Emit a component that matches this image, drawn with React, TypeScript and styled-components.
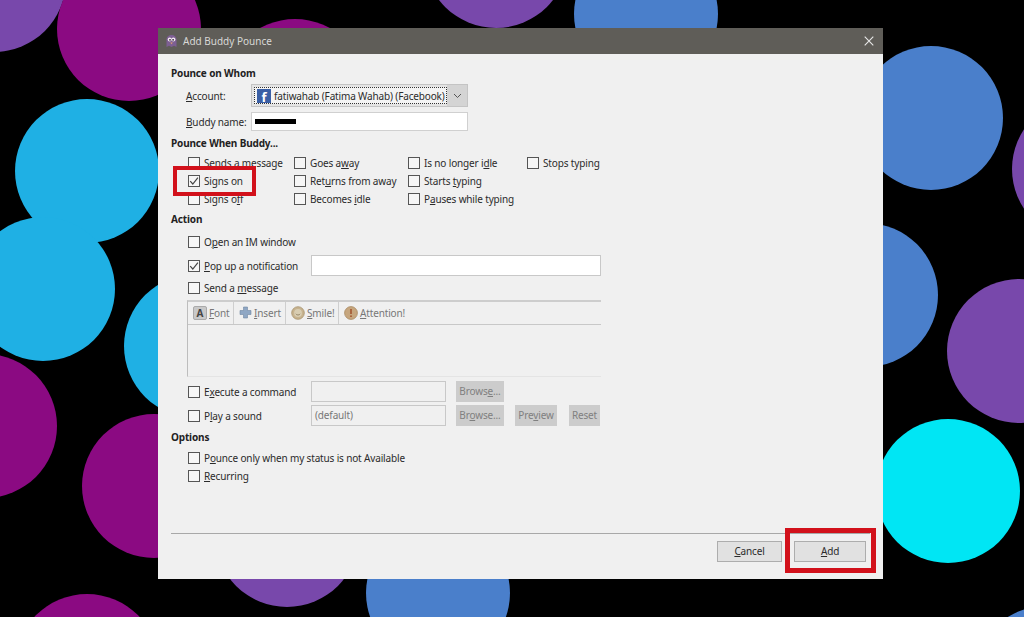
import React from 'react';
import styled, { createGlobalStyle } from 'styled-components';

// Background dots
const PURPLE = '#7848ab';
const MAGENTA = '#8b0a82';
const BLUE = '#4a7fcb';
const CYAN = '#1fb0e4';

const dots = [
  { x: -6, y: -20, c: PURPLE },
  { x: 129, y: 29, c: MAGENTA },
  { x: 295, y: 91, c: MAGENTA },
  { x: 496, y: -44, c: PURPLE },
  { x: 646, y: 14, c: BLUE },
  { x: 87, y: 171, c: CYAN },
  { x: 43, y: 289, c: CYAN },
  { x: 196, y: 346, c: CYAN },
  { x: -15, y: 426, c: MAGENTA },
  { x: 154, y: 486, c: MAGENTA },
  { x: 87, y: 666, c: MAGENTA },
  { x: 287, y: 535, c: PURPLE },
  { x: 438, y: 593, c: BLUE },
  { x: 931, y: 118, c: BLUE },
  { x: 1084, y: 169, c: PURPLE },
  { x: 866, y: 295, c: BLUE },
  { x: 1019, y: 351, c: PURPLE },
  { x: 948, y: 491, c: '#00e6f4' },
  { x: 1046, y: 678, c: BLUE },
];

const Check = ({ checked, children }: { checked?: boolean; children: React.ReactNode }) => (
  <CheckLabel>
    <Box>
      {checked && (
        <svg width="10" height="10" viewBox="0 0 10 10">
          <path d="M1.2 5.2 L3.8 8 L8.9 1.6" fill="none" stroke="#444" strokeWidth="1.2" />
        </svg>
      )}
    </Box>
    <span>{children}</span>
  </CheckLabel>
);

const App = () => {
  return (
    <>
      <GlobalStyle />
      <Desktop>
        {dots.map((d, i) => (
          <Dot key={i} $x={d.x} $y={d.y} $c={d.c} />
        ))}
        <Dialog>
          <TitleBar>
            <svg width="13" height="14" viewBox="0 0 13 14">
              <path d="M1.5 13 V6 C1.5 2.5 3.8 1 6.5 1 C9.2 1 11.5 2.5 11.5 6 V13 L9 11.8 L6.5 13 L4 11.8 Z" fill="#7d5f93" />
              <circle cx="4.7" cy="5.6" r="2" fill="#f1e6ee" />
              <circle cx="8.4" cy="5.6" r="2" fill="#f1e6ee" />
              <circle cx="5" cy="5.8" r="0.9" fill="#30283a" />
              <circle cx="8.1" cy="5.8" r="0.9" fill="#30283a" />
              <path d="M5.3 8.6 H7.8 L6.5 10.2 Z" fill="#e2a070" />
            </svg>
            <TitleText>Add Buddy Pounce</TitleText>
            <svg width="10" height="10" viewBox="0 0 10 10">
              <path d="M0.7 0.7 L9.3 9.3 M9.3 0.7 L0.7 9.3" stroke="#e8e8e8" strokeWidth="1.1" />
            </svg>
          </TitleBar>
          <Body>
            <Content>
              <SectionTitle>Pounce on Whom</SectionTitle>
              <AccountRow>
                <FieldLabel><u>A</u>ccount:</FieldLabel>
                <Combo>
                  <ComboValue>
                    <FbIcon>f</FbIcon>
                    <span>fatiwahab (Fatima Wahab) (Facebook)</span>
                  </ComboValue>
                  <ComboArrow>
                    <svg width="9" height="6" viewBox="0 0 9 6">
                      <path d="M1 1 L4.5 4.5 L8 1" fill="none" stroke="#555" strokeWidth="1" />
                    </svg>
                  </ComboArrow>
                </Combo>
              </AccountRow>
              <BuddyRow>
                <FieldLabel><u>B</u>uddy name:</FieldLabel>
                <BuddyInput>
                  <Redaction />
                </BuddyInput>
              </BuddyRow>

              <WhenTitle>Pounce When Buddy...</WhenTitle>
              <CheckGrid>
                <Check>Sends a message</Check>
                <Check checked>Signs on</Check>
                <Check>Signs o<u>f</u>f</Check>
                <Check>Goes a<u>w</u>ay</Check>
                <Check>Ret<u>u</u>rns from away</Check>
                <Check>Becomes <u>i</u>dle</Check>
                <Check>Is no longer i<u>d</u>le</Check>
                <Check>Starts <u>t</u>yping</Check>
                <Check>P<u>a</u>uses while typing</Check>
                <Check>Stops typing</Check>
              </CheckGrid>

              <ActionTitle>Action</ActionTitle>
              <OpenRow>
                <Check>O<u>p</u>en an IM window</Check>
              </OpenRow>
              <InputRow $gap={4}>
                <CheckCell>
                  <Check checked><u>P</u>op up a notification</Check>
                </CheckCell>
                <TextInput $width={290} />
              </InputRow>
              <MessageRow>
                <Check>Send a <u>m</u>essage</Check>
              </MessageRow>
              <Editor>
                <Toolbar>
                  <ToolItem $width={46}>
                    <FontIcon>A</FontIcon>
                    <span><u>F</u>ont</span>
                  </ToolItem>
                  <ToolItem $width={52}>
                    <svg width="13" height="13" viewBox="0 0 13 13">
                      <path d="M4.5 1 H8.5 V4.5 H12 V8.5 H8.5 V12 H4.5 V8.5 H1 V4.5 H4.5 Z" fill="#8fa7c4" stroke="#6f86a3" strokeWidth="0.6" />
                    </svg>
                    <span><u>I</u>nsert</span>
                  </ToolItem>
                  <ToolItem $width={53}>
                    <svg width="14" height="14" viewBox="0 0 14 14">
                      <circle cx="7" cy="7" r="6.3" fill="#c7b38f" stroke="#a8946f" strokeWidth="0.8" />
                      <circle cx="7" cy="7" r="3.9" fill="#d8cdb2" />
                      <path d="M4.8 7.8 C5.6 9.4 8.4 9.4 9.2 7.8" fill="none" stroke="#8a7a5a" strokeWidth="0.8" />
                    </svg>
                    <span><u>S</u>mile!</span>
                  </ToolItem>
                  <ToolItem $last>
                    <svg width="14" height="14" viewBox="0 0 14 14">
                      <circle cx="7" cy="7" r="6.4" fill="#c6a67e" stroke="#a98a62" strokeWidth="0.8" />
                      <path d="M7 3 V8" stroke="#a2552f" strokeWidth="1.6" />
                      <circle cx="7" cy="10.2" r="0.9" fill="#a2552f" />
                    </svg>
                    <span><u>A</u>ttention!</span>
                  </ToolItem>
                </Toolbar>
              </Editor>
              <InputRow $gap={4}>
                <CheckCell>
                  <Check>E<u>x</u>ecute a command</Check>
                </CheckCell>
                <TextInput $width={135} $disabled />
                <GreyButton $width={48} $left={10}>Brows<u>e</u>...</GreyButton>
              </InputRow>
              <InputRow $gap={3}>
                <CheckCell>
                  <Check>P<u>l</u>ay a sound</Check>
                </CheckCell>
                <TextInput $width={135} $disabled>(default)</TextInput>
                <GreyButton $width={48} $left={10}>Br<u>o</u>wse...</GreyButton>
                <GreyButton $width={42} $left={11}>Pre<u>v</u>iew</GreyButton>
                <GreyButton $width={31} $left={12}>Reset</GreyButton>
              </InputRow>

              <OptionsTitle>Options</OptionsTitle>
              <PounceRow>
                <Check>P<u>o</u>unce only when my status is not Available</Check>
              </PounceRow>
              <RecurringRow>
                <Check><u>R</u>ecurring</Check>
              </RecurringRow>
            </Content>
            <Footer>
              <Separator />
              <Buttons>
                <DialogButton $width={65}><u>C</u>ancel</DialogButton>
                <DialogButton $width={72}><u>A</u>dd</DialogButton>
              </Buttons>
            </Footer>
          </Body>
        </Dialog>
        <Highlight $x={173} $y={166} $w={83} $h={30} $b={4} />
        <Highlight $x={785} $y={528} $w={91} $h={45} $b={5} />
      </Desktop>
    </>
  );
};

// Styled
const GlobalStyle = createGlobalStyle`
  html, body {
    margin: 0;
    padding: 0;
    background: #000;
  }
  u {
    text-underline-offset: 1px;
    text-decoration-thickness: 1px;
  }
`;

const Desktop = styled.div`
  position: relative;
  width: 1024px;
  height: 617px;
  overflow: hidden;
  background: #000;
  font-family: 'Noto Sans', 'Open Sans', sans-serif;
  font-size: 10px;
  letter-spacing: -0.15px;
  color: #2b2b2b;
`;

const Dot = styled.div<{ $x: number; $y: number; $c: string }>`
  position: absolute;
  left: ${({ $x }) => $x - 72}px;
  top: ${({ $y }) => $y - 72}px;
  width: 144px;
  height: 144px;
  border-radius: 50%;
  background: ${({ $c }) => $c};
`;

const Dialog = styled.div`
  position: absolute;
  left: 158px;
  top: 28px;
  width: 725px;
  height: 551px;
  display: flex;
  flex-direction: column;
  background: #f0f0f0;
`;

const TitleBar = styled.div`
  display: flex;
  align-items: center;
  height: 26px;
  flex: none;
  padding: 0 9px 0 7px;
  background: #5f5d58;
  color: #d8d8d6;
`;

const TitleText = styled.div`
  flex: 1;
  margin-left: 5px;
  letter-spacing: 0;
`;

const Body = styled.div`
  flex: 1;
  display: flex;
  flex-direction: column;
  padding: 12px 13px 17px;
`;

const Content = styled.div`
  width: 430px;
  display: flex;
  flex-direction: column;
`;

const SectionTitle = styled.div`
  height: 14px;
  line-height: 14px;
  font-weight: 700;
  color: #222;
  white-space: nowrap;
`;

const WhenTitle = styled(SectionTitle)`
  margin-top: 5px;
`;

const ActionTitle = styled(SectionTitle)`
  margin-top: 4px;
`;

const OptionsTitle = styled(SectionTitle)`
  margin-top: 4px;
`;

const AccountRow = styled.div`
  display: flex;
  align-items: center;
  margin-top: 4px;
  padding-left: 15px;
`;

const BuddyRow = styled(AccountRow)`
  margin-top: 5px;
`;

const FieldLabel = styled.div`
  width: 65px;
  flex: none;
  white-space: nowrap;
`;

const Combo = styled.div`
  display: flex;
  width: 217px;
  height: 23px;
  box-sizing: border-box;
  border: 1px solid #c4c4c4;
  background: #e4e4e4;
`;

const ComboValue = styled.div`
  flex: 1;
  min-width: 0;
  display: flex;
  align-items: center;
  gap: 3px;
  margin: 2px 0 2px 2px;
  padding-left: 3px;
  outline: 1px dotted #333;
  outline-offset: -1px;
  background: #f4f4f4;
  white-space: nowrap;
`;

const FbIcon = styled.div`
  width: 14px;
  height: 14px;
  flex: none;
  background: #3a5fa5;
  color: #fff;
  font-weight: 700;
  font-size: 13px;
  line-height: 16px;
  text-align: center;
`;

const ComboArrow = styled.div`
  width: 20px;
  flex: none;
  display: flex;
  align-items: center;
  justify-content: center;
  background: #d4d4d4;
`;

const BuddyInput = styled.div`
  display: flex;
  align-items: center;
  width: 217px;
  height: 19px;
  box-sizing: border-box;
  border: 1px solid #d0d0d0;
  padding-left: 3px;
  background: #fff;
`;

const Redaction = styled.div`
  width: 41px;
  height: 5px;
  background: #000;
`;

const CheckGrid = styled.div`
  display: grid;
  grid-auto-flow: column;
  grid-template-columns: 106px 114px 119px auto;
  grid-template-rows: repeat(3, 18px);
  margin-top: 4px;
  padding-left: 17px;
`;

const CheckLabel = styled.label`
  display: flex;
  align-items: center;
  gap: 4px;
  white-space: nowrap;
`;

const Box = styled.div`
  width: 12px;
  height: 12px;
  flex: none;
  display: flex;
  align-items: center;
  justify-content: center;
  box-sizing: border-box;
  border: 1px solid #555;
  background: #f6f6f6;
`;

const OpenRow = styled.div`
  height: 18px;
  display: flex;
  margin-top: 7px;
  padding-left: 17px;
`;

const MessageRow = styled(OpenRow)`
  margin-top: 3px;
`;

const PounceRow = styled(OpenRow)`
  margin-top: 5px;
`;

const RecurringRow = styled(OpenRow)`
  margin-top: 0;
`;

const InputRow = styled.div<{ $gap: number }>`
  display: flex;
  align-items: center;
  height: 21px;
  margin-top: ${({ $gap }) => $gap}px;
  padding-left: 17px;
`;

const CheckCell = styled.div`
  width: 123px;
  flex: none;
`;

const TextInput = styled.div<{ $width: number; $disabled?: boolean }>`
  width: ${({ $width }) => $width}px;
  height: 21px;
  line-height: 19px;
  flex: none;
  box-sizing: border-box;
  border: 1px solid #c8c8c8;
  padding-left: 3px;
  color: #777;
  background: ${({ $disabled }) => ($disabled ? '#f0f0f0' : '#fff')};
`;

const GreyButton = styled.div<{ $width: number; $left: number }>`
  width: ${({ $width }) => $width}px;
  height: 21px;
  line-height: 21px;
  flex: none;
  margin-left: ${({ $left }) => $left}px;
  text-align: center;
  background: #cccccc;
  color: #808080;
  white-space: nowrap;
`;

const Editor = styled.div`
  height: 77px;
  flex: none;
  margin: 3px 0 0 16px;
  width: 414px;
  box-sizing: border-box;
  border-top: 2px solid #cdcdcd;
  border-left: 1px solid #bdbdbd;
  border-bottom: 1px solid #e4e4e4;
`;

const Toolbar = styled.div`
  display: flex;
  height: 22px;
  border-bottom: 1px solid #c8c8c8;
  color: #777;
`;

const ToolItem = styled.div<{ $width?: number; $last?: boolean }>`
  display: flex;
  align-items: center;
  gap: 2px;
  width: ${({ $width }) => ($width ? `${$width}px` : 'auto')};
  box-sizing: border-box;
  padding: 0 0 1px 5px;
  border-right: ${({ $last }) => ($last ? 'none' : '1px solid #cfcfcf')};
  white-space: nowrap;
`;

const FontIcon = styled.div`
  width: 14px;
  height: 14px;
  flex: none;
  box-sizing: border-box;
  border: 1px solid #aaa;
  border-radius: 2px;
  background: #c9c9c9;
  color: #444;
  font-weight: 700;
  font-size: 10px;
  line-height: 12px;
  text-align: center;
`;

const Footer = styled.div`
  margin-top: auto;
  display: flex;
  flex-direction: column;
`;

const Separator = styled.div`
  height: 1px;
  background: #a8a8a8;
`;

const Buttons = styled.div`
  display: flex;
  justify-content: flex-end;
  gap: 12px;
  margin-top: 7px;
  padding-right: 4px;
`;

const DialogButton = styled.div<{ $width: number }>`
  width: ${({ $width }) => $width}px;
  height: 21px;
  line-height: 19px;
  box-sizing: border-box;
  border: 1px solid #adadad;
  background: #e1e1e1;
  text-align: center;
`;

const Highlight = styled.div<{ $x: number; $y: number; $w: number; $h: number; $b: number }>`
  position: absolute;
  left: ${({ $x }) => $x}px;
  top: ${({ $y }) => $y}px;
  width: ${({ $w }) => $w}px;
  height: ${({ $h }) => $h}px;
  box-sizing: border-box;
  border: ${({ $b }) => $b}px solid #d2111b;
`;

export default App;
